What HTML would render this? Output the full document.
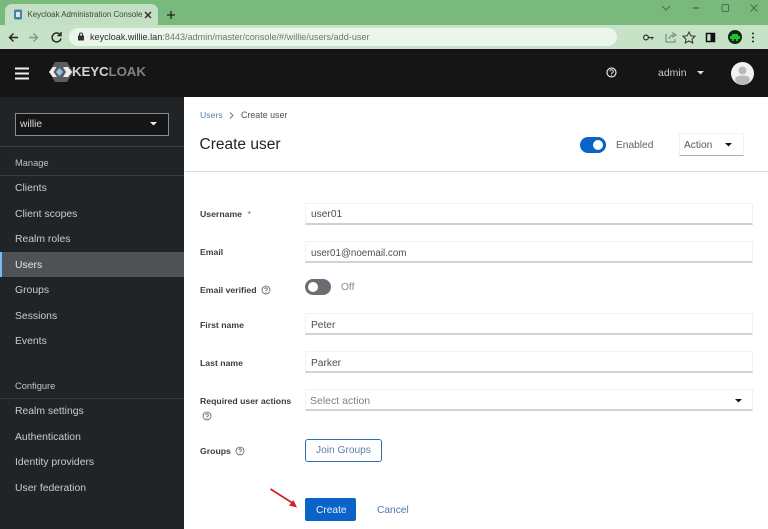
<!DOCTYPE html>
<html><head><meta charset="utf-8"><style>
html,body{margin:0;padding:0}
body{width:768px;height:529px;overflow:hidden;position:relative;background:#fff;font-family:"Liberation Sans",sans-serif;font-size:10.5px;color:#222}
#w{position:absolute;left:0;top:0;width:768px;height:529px;overflow:hidden;filter:blur(.3px)}
.a{position:absolute}
.t{position:absolute;white-space:nowrap;line-height:14px;height:14px}
.nav{color:#c9cbcd;font-size:10.4px;left:15px}
.lb{font-weight:bold;left:200px;color:#3a3d40;font-size:8.7px}
.in{position:absolute;left:305px;width:448px;height:22px;background:#fff;border:1px solid #f2f2f2;border-bottom:2px solid #d0d2d4;box-sizing:border-box}
.v{left:311px;color:#4a4d50;font-size:10.2px}
svg{position:absolute;overflow:visible}
</style></head><body><div id="w">
<div class="a" style="left:0;top:0;width:768px;height:26px;background:#79ba7c"></div>
<div class="a" style="left:5px;top:4px;width:153px;height:22px;background:#c3e0c4;border-radius:7px 7px 0 0"></div>
<svg style="left:13px;top:9px" width="10" height="11"><rect x="1" y="0.5" width="8" height="10" rx="1.5" fill="#4a7fa8"/><rect x="3" y="3" width="4" height="5" fill="#d8e8e8"/></svg>
<div class="t" style="left:27.500px;top:8px;font-size:7.9px;color:#3c4a40">Keycloak Administration Console</div>
<svg style="left:143.500px;top:11px" width="8" height="8"><path d="M1 1L7 7M7 1L1 7" stroke="#333" stroke-width="1.5"/></svg>
<svg style="left:166px;top:10px" width="10" height="10"><path d="M5 1V9M1 5H9" stroke="#222" stroke-width="1.3"/></svg>
<svg style="left:660px;top:3px" width="108" height="15" fill="none" stroke="#4b6a4d" stroke-width="1"><path d="M2 3L6 7L10 3"/><path d="M33 5H39" stroke-width="1.400"/><rect x="62" y="1.500" width="6.500" height="7" rx="1"/><path d="M90.500 1.500L97.500 8.500M97.500 1.500L90.500 8.500"/></svg>
<div class="a" style="left:0;top:25px;width:768px;height:24px;background:#c6e2c7"></div>
<div class="a" style="left:69px;top:28px;width:548px;height:18px;background:#ecf5ec;border-radius:9px"></div>
<svg style="left:8px;top:30.500px" width="55" height="13" fill="none" stroke-width="1.400"><path d="M10 6.500H1.500M5.500 2.500L1.500 6.500L5.500 10.500" stroke="#222"/><path d="M21 6.500H29.500M25.500 2.500L29.500 6.500L25.500 10.500" stroke="#7f9a80"/><path d="M52 3.500A4.500 4.500 0 1 0 53 7.500" stroke="#222"/><path d="M53 1V4.500H49.500" stroke="#222"/></svg>
<svg style="left:77px;top:32px" width="8" height="9"><rect x="1" y="3.500" width="6" height="5" rx=".5" fill="#333"/><path d="M2.500 4V2.500A1.500 1.500 0 0 1 5.500 2.500V4" fill="none" stroke="#333"/></svg>
<div class="t" style="left:90px;top:30px;font-size:9.1px;color:#6a7a6b"><span style="color:#25302a">keycloak.willie.lan</span>:8443/admin/master/console/#/willie/users/add-user</div>
<svg style="left:640px;top:30px" width="125" height="15" fill="none"><circle cx="6" cy="7.500" r="2.400" stroke="#333" stroke-width="1.200"/><path d="M8 7.500H13.500M12 7.500V9.500" stroke="#333" stroke-width="1.200"/><path d="M26 4V12H35V9M29 9C30 6 32 5 34 5M32 2.500L36 5L32 7.500" stroke="#6b7f6c"/><path d="M49 2L50.800 5.800L55 6.300L52 9.100L52.800 13L49 11L45.200 13L46 9.100L43 6.300L47.200 5.800Z" stroke="#333"/><rect x="66.500" y="3.500" width="8" height="8" stroke="#111" stroke-width="1.500"/><rect x="70.500" y="3.500" width="4" height="8" fill="#111"/><circle cx="95" cy="7" r="7" fill="#0c2a12"/><path d="M90 6H92V4H98V6H100V9H98V11H96V9H94V11H92V9H90Z" fill="#25c02f"/><circle cx="113" cy="3.500" r="1" fill="#222"/><circle cx="113" cy="7.500" r="1" fill="#222"/><circle cx="113" cy="11.500" r="1" fill="#222"/></svg>

<div class="a" style="left:0;top:49px;width:768px;height:48px;background:#151515"></div>
<svg style="left:15px;top:67px" width="15" height="13"><path d="M0 1.500H14M0 6.500H14M0 11.500H14" stroke="#f0f0f0" stroke-width="2"/></svg>
<svg style="left:48px;top:60px" width="26" height="24"><path d="M7 2H19L25 12L19 22H7L1 12Z" fill="#5b5e60"/><path d="M5 7L1 12L5 17H9L5.500 12L8.500 7Z" fill="#eceef0"/><path d="M15 7L18 12L15 17H20L24 12L20 7Z" fill="#eceef0"/><path d="M11.500 8L15 12L11.500 16L8 12Z" fill="#8cc8ee"/></svg>
<div class="t" style="left:72px;top:63px;font-size:13.300px;line-height:18px;height:18px;font-weight:bold;letter-spacing:-.1px;color:#9a9c9e"><span style="color:#d2d4d6">KEYC</span><span style="color:#808385">LOAK</span></div>
<svg style="left:606px;top:67px" width="12" height="12" fill="none"><circle cx="5.500" cy="5.500" r="4.500" stroke="#e4e4e4" stroke-width="1.200"/><path d="M3.900 4.400A1.700 1.700 0 1 1 5.500 6.200V7" stroke="#e4e4e4"/><circle cx="5.500" cy="8.300" r=".6" fill="#e4e4e4"/></svg>
<div class="t" style="left:658px;top:66px;font-size:10.5px;color:#c9c9c9">admin</div>
<svg style="left:697px;top:71px" width="8" height="4"><path d="M0 0H7L3.500 3.500Z" fill="#ddd"/></svg>
<svg style="left:731px;top:62px" width="23" height="23"><circle cx="11.500" cy="11.500" r="11.500" fill="#f2f2f2"/><circle cx="11.500" cy="8.500" r="4" fill="#b8bbbe"/><path d="M4 18.500C4 14.500 7 13.500 11.500 13.500S19 14.500 19 18.500C17 21.500 14 23 11.500 23S6 21.500 4 18.500Z" fill="#b8bbbe"/></svg>

<div class="a" style="left:0;top:97px;width:184px;height:432px;background:#212427"></div>
<div class="a" style="left:15px;top:113px;width:154px;height:23px;background:#151515;border:1px solid #8a8d90;box-sizing:border-box"></div>
<div class="t" style="left:20px;top:118px;color:#d8d8d8;font-size:10.2px">willie</div>
<svg style="left:150px;top:122px" width="8" height="4"><path d="M0 0H7L3.500 3.500Z" fill="#eee"/></svg>
<div class="a" style="left:0;top:146px;width:184px;height:1px;background:#3c3f42"></div>
<div class="t" style="left:15px;top:156px;color:#c0c2c4;font-size:9.300px">Manage</div>
<div class="a" style="left:0;top:175px;width:184px;height:1px;background:#3c3f42"></div>
<div class="a" style="left:0;top:252px;width:184px;height:25px;background:#4f5255"></div>
<div class="a" style="left:0;top:252px;width:2px;height:25px;background:#73bcf7"></div>
<div class="t nav" style="top:182px">Clients</div>
<div class="t nav" style="top:208px">Client scopes</div>
<div class="t nav" style="top:233px">Realm roles</div>
<div class="t nav" style="top:259px;color:#e4e5e6">Users</div>
<div class="t nav" style="top:284px">Groups</div>
<div class="t nav" style="top:310px">Sessions</div>
<div class="t nav" style="top:335px">Events</div>
<div class="t" style="left:15px;top:379px;color:#c0c2c4;font-size:9.300px">Configure</div>
<div class="a" style="left:0;top:398px;width:184px;height:1px;background:#33363a"></div>
<div class="t nav" style="top:405px">Realm settings</div>
<div class="t nav" style="top:431px">Authentication</div>
<div class="t nav" style="top:456px">Identity providers</div>
<div class="t nav" style="top:482px">User federation</div>

<div class="t" style="left:200px;top:108px;color:#5a7fae;font-size:8.700px">Users</div>
<svg style="left:229px;top:112px" width="5" height="7"><path d="M1 .5L4 3.500L1 6.500" fill="none" stroke="#777"/></svg>
<div class="t" style="left:241px;top:108px;color:#4d5053;font-size:8.900px">Create user</div>
<div class="t" style="left:199.500px;top:135px;height:20px;line-height:20px;font-size:15.500px;color:#1f2225">Create user</div>
<div class="a" style="left:580px;top:137px;width:26px;height:16px;background:#0a63c6;border-radius:8px"></div>
<div class="a" style="left:593px;top:140px;width:10px;height:10px;background:#fff;border-radius:50%"></div>
<div class="t" style="left:616px;top:139px;color:#5f6265;font-size:10.2px">Enabled</div>
<div class="a" style="left:679px;top:133px;width:65px;height:23px;background:#fff;border:1px solid #f1f1f1;border-bottom:1px solid #aeb0b2;box-sizing:border-box"></div>
<div class="t" style="left:684px;top:139px;color:#55585b;font-size:10.200px">Action</div>
<svg style="left:725px;top:143px" width="8" height="4"><path d="M0 0H7L3.500 3.500Z" fill="#151515"/></svg>
<div class="a" style="left:185px;top:171px;width:583px;height:1px;background:#d8d9da"></div>

<div class="t lb" style="top:207px">Username <span style="color:#b04a4a;font-weight:normal;margin-left:3px">*</span></div>
<div class="in" style="top:203px"></div><div class="t v" style="top:208px">user01</div>
<div class="t lb" style="top:245px">Email</div>
<div class="in" style="top:241px"></div><div class="t v" style="top:247px;font-size:9.8px">user01@noemail.com</div>
<div class="t lb" style="top:283px">Email verified</div>
<div class="a" style="left:305px;top:279px;width:26px;height:16px;background:#6a6e73;border-radius:8px"></div>
<div class="a" style="left:308px;top:282px;width:10px;height:10px;background:#fff;border-radius:50%"></div>
<div class="t" style="left:341px;top:281px;color:#85888b;font-size:10.2px">Off</div>
<div class="t lb" style="top:318px">First name</div>
<div class="in" style="top:313px"></div><div class="t v" style="top:319px">Peter</div>
<div class="t lb" style="top:356px">Last name</div>
<div class="in" style="top:351px"></div><div class="t v" style="top:357px">Parker</div>
<div class="t lb" style="top:394px">Required user actions</div>
<div class="in" style="top:389px"></div><div class="t" style="left:310px;top:394px;color:#7d8083;font-size:10.500px">Select action</div>
<svg style="left:735px;top:399px" width="8" height="4"><path d="M0 0H7L3.500 3.500Z" fill="#151515"/></svg>
<div class="t lb" style="top:444px">Groups</div>
<div class="a" style="left:305px;top:439px;width:77px;height:23px;border:1px solid #2f6fb0;border-radius:3px;box-sizing:border-box"></div>
<div class="t" style="left:316px;top:444px;color:#5b80aa;font-size:10.200px">Join Groups</div>
<svg class="q" style="left:261px;top:285px" width="10" height="10" fill="none"><circle cx="5" cy="5" r="4" stroke="#5a5d60" stroke-width=".8"/><path d="M3.700 4A1.300 1.300 0 1 1 5 5.400V6" stroke="#5a5d60" stroke-width=".8"/><circle cx="5" cy="7.200" r=".5" fill="#5a5d60"/></svg>
<svg style="left:201.500px;top:411px" width="10" height="10" fill="none"><circle cx="5" cy="5" r="4" stroke="#5a5d60" stroke-width=".8"/><path d="M3.700 4A1.300 1.300 0 1 1 5 5.400V6" stroke="#5a5d60" stroke-width=".8"/><circle cx="5" cy="7.200" r=".5" fill="#5a5d60"/></svg>
<svg style="left:235px;top:446px" width="10" height="10" fill="none"><circle cx="5" cy="5" r="4" stroke="#5a5d60" stroke-width=".8"/><path d="M3.700 4A1.300 1.300 0 1 1 5 5.400V6" stroke="#5a5d60" stroke-width=".8"/><circle cx="5" cy="7.200" r=".5" fill="#5a5d60"/></svg>

<div class="a" style="left:305px;top:498px;width:51px;height:23px;background:#0a63c6;border-radius:2px"></div>
<div class="t" style="left:316px;top:504px;color:#e8f0fa;font-size:10.200px">Create</div>
<div class="t" style="left:377px;top:504px;color:#4f77a8;font-size:10.200px">Cancel</div>
<svg style="left:268px;top:487px" width="34" height="24"><path d="M2.500 2L26 17" stroke="#d0202a" stroke-width="1.800"/><path d="M21 18.500L29 20.500L25.500 13Z" fill="#d0202a"/></svg>
</div></body></html>
